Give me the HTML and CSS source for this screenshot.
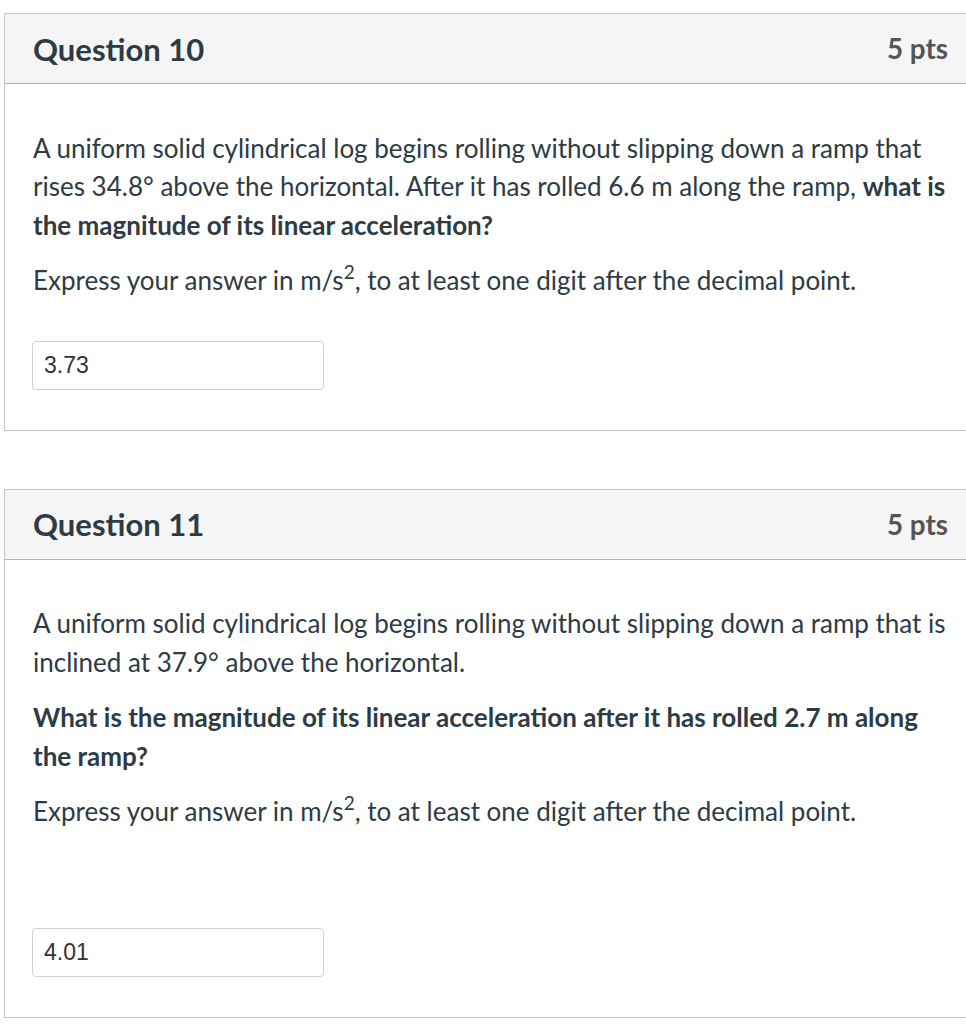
FILE: index.html
```html
<!DOCTYPE html>
<html>
<head>
<meta charset="utf-8">
<link rel="stylesheet" href="styles.css">
</head>
<body>
<div class="page">
  <div class="card">
    <div class="card-header">
      <h2 class="q-title">Question 10</h2>
      <span class="q-pts">5 pts</span>
    </div>
    <div class="card-body">
      <p class="txt">A uniform solid cylindrical log begins rolling without slipping down a ramp that rises 34.8° above the horizontal. After it has rolled 6.6 m along the ramp, <strong>what is the magnitude of its linear acceleration?</strong></p>
      <p class="txt">Express your answer in m/s<sup>2</sup>, to at least one digit after the decimal point.</p>
      <div class="answer">3.73</div>
    </div>
  </div>
  <div class="card card2">
    <div class="card-header">
      <h2 class="q-title">Question 11</h2>
      <span class="q-pts">5 pts</span>
    </div>
    <div class="card-body">
      <p class="txt">A uniform solid cylindrical log begins rolling without slipping down a ramp that is inclined at 37.9° above the horizontal.</p>
      <p class="txt"><strong>What is the magnitude of its linear acceleration after it has rolled 2.7 m along the ramp?</strong></p>
      <p class="txt">Express your answer in m/s<sup>2</sup>, to at least one digit after the decimal point.</p>
      <p class="txt">&nbsp;</p>
      <div class="answer">4.01</div>
    </div>
  </div>
</div>
</body>
</html>
```

FILE: styles.css
```css
html, body {
  margin: 0;
  padding: 0;
  background: #fff;
  overflow-x: hidden;
}
body {
  font-family: Lato, "Open Sans", sans-serif;
  color: #2d3b45;
}
.page {
  padding: 13px 0 0 4px;
  width: 973px;
}
.card {
  border: 1px solid #c4c4c4;
  background: #fff;
}
.card2 {
  margin-top: 58px;
}
.card-header {
  background: #f5f5f5;
  border-bottom: 1px solid #b5b5b5;
  height: 69px;
  display: flex;
  align-items: center;
  justify-content: space-between;
  padding: 0 28px;
}
.q-title {
  margin: 0;
  font-size: 31px;
  font-weight: 700;
  color: #2d3b45;
}
.q-pts {
  font-size: 27.8px;
  font-weight: 700;
  color: #555;
}
.card-body {
  padding: 44.5px 28px 40px 28px;
}
.txt {
  margin: 0 0 16.8px 0;
  font-size: 26px;
  line-height: 38.6px;
  width: 918px;
}
.txt:last-of-type {
  margin-bottom: 0;
}
sup {
  font-size: 19px;
  line-height: 0;
  vertical-align: 11px;
}
strong {
  font-weight: 700;
}
.answer {
  margin-top: 41.2px;
  margin-left: -1px;
  width: 279px;
  height: 47px;
  border: 1px solid #d2d2d2;
  border-radius: 4px;
  font-family: "Liberation Sans", Arial, sans-serif;
  font-size: 23px;
  color: #333;
  display: flex;
  align-items: center;
  padding: 0 0 0 11px;
}
```
